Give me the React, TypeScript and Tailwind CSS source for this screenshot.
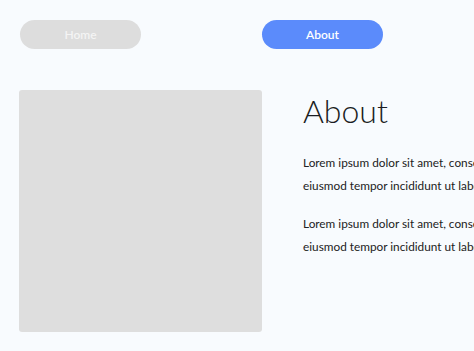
export default function App() {
  const lorem =
    "Lorem ipsum dolor sit amet, consectetur adipiscing elit, sed do eiusmod tempor incididunt ut labore et dolore magna aliqua.";
  return (
    <div
      className="w-[474px] h-[351px] overflow-hidden bg-[#f8fbfe]"
      style={{ fontFamily: 'Lato, "Noto Sans", sans-serif' }}
    >
      <div className="w-[700px]">
        <nav className="flex gap-[121px] pl-[20px] pt-[20px]">
          <button className="w-[121px] h-[29px] rounded-full bg-[#dddddd] text-[12px] font-semibold text-[#f4f4f4]">
            Home
          </button>
          <button className="w-[121px] h-[29px] rounded-full bg-[#5b8bfb] text-[12px] font-semibold text-white">
            About
          </button>
        </nav>
        <div className="flex mt-[41px] pl-[19px]">
          <div className="w-[243px] h-[242px] shrink-0 rounded-[3px] bg-[#dedede]" />
          <div className="ml-[41px] w-[350px] shrink-0">
            <h1 className="text-[32px] font-light leading-none text-[#1b1d22] mt-[5px]">About</h1>
            <p className="mt-[24px] text-[11.8px] leading-[23px] text-[#222]">{lorem}</p>
            <p className="mt-[15px] text-[11.8px] leading-[23px] text-[#222]">{lorem}</p>
          </div>
        </div>
      </div>
    </div>
  );
}
